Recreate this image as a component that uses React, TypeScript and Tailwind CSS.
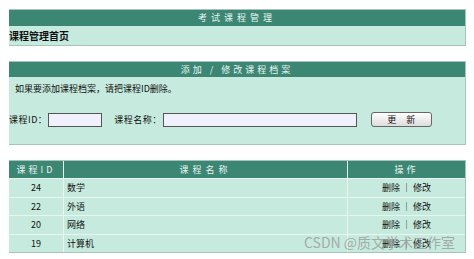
export default function App() {
  const rows = [
    { id: 24, name: "数学" },
    { id: 22, name: "外语" },
    { id: 20, name: "网络" },
    { id: 19, name: "计算机" },
  ]

  return (
    <main
      className="relative w-[474px] h-[259px] bg-white overflow-hidden text-[#111]"
      style={{ fontFamily: '"Noto Sans CJK SC", "Noto Sans", sans-serif' }}
    >
      <div className="flex flex-col gap-[15px] pt-[9px] pl-[9px] w-[466px]">

        {/* 首页 */}
        <section className="border border-[#a8c4ba] border-l-0">
          <div className="h-[16px] bg-[#3c8674] text-[#e8f5f0] text-[9px] leading-[16px] text-center tracking-[4px]">
            考试课程管理
          </div>
          <div className="h-[19px] bg-[#c6eadd] text-[10px] font-bold leading-[19px]">
            课程管理首页
          </div>
        </section>

        {/* 添加 / 修改 */}
        <section className="border border-[#a8c4ba] border-l-0 bg-[#c6eadd] h-[84px] flex flex-col">
          <div className="h-[15px] bg-[#3c8674] text-[#e8f5f0] text-[9px] leading-[15px] text-center tracking-[3px]">
            添加 / 修改课程档案
          </div>
          <p className="pl-[6px] pt-[5px] text-[9px] leading-[14px]">
            如果要添加课程档案，请把课程ID删除。
          </p>
          <div className="mt-[16px] flex items-center text-[9px]">
            <span className="tracking-[0.5px]">课程ID：</span>
            <input className="ml-[1px] w-[54px] h-[14px] bg-[#f1f0fd] border border-[#555] outline-none" />
            <span className="ml-[12px] tracking-[0.5px]">课程名称：</span>
            <input className="ml-[1px] w-[194px] h-[14px] bg-[#f1f0fd] border border-[#555] outline-none" />
            <button className="ml-[14px] w-[61px] h-[15px] rounded-[3px] border border-[#666] bg-gradient-to-b from-white to-[#dcdcdc] text-[9px] leading-[13px] tracking-[10px] pl-[10px]">
              更新
            </button>
          </div>
        </section>

        {/* 列表 */}
        <section className="border border-[#a8c4ba] border-l-0 bg-[#c6eadd]">
          <div className="flex h-[17px] bg-[#3c8674] text-[#e8f5f0] text-[9px] leading-[17px] text-center">
            <div className="w-[55px] border-r border-[#e6f4ef] tracking-[3px]">课程ID</div>
            <div className="flex-1 border-r border-[#e6f4ef] tracking-[4px]">课程名称</div>
            <div className="w-[117px] tracking-[3px]">操作</div>
          </div>
          {rows.map((r) => (
            <div
              key={r.id}
              className="flex h-[18.5px] border-t border-[#e8f6f0] text-[9px] leading-[17px]"
            >
              <div className="w-[55px] border-r border-[#e8f6f0] text-center">{r.id}</div>
              <div className="flex-1 border-r border-[#e8f6f0] pl-[3px]">{r.name}</div>
              <div className="w-[117px] text-center">删除 ｜ 修改</div>
            </div>
          ))}
        </section>
      </div>

      {/* 水印 */}
      <div className="absolute left-[304px] top-[233px] text-[14px] leading-[18px] text-[#9a9a9a]/80 whitespace-nowrap">
        CSDN @质文学术工作室
      </div>
    </main>
  )
}
